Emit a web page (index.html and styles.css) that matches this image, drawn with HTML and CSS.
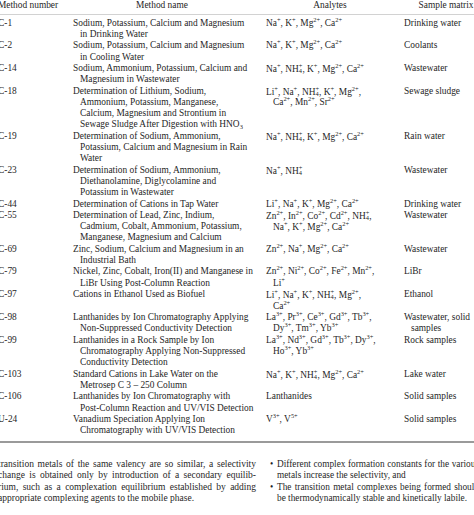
FILE: index.html
```html
<!DOCTYPE html>
<html>
<head>
<meta charset="utf-8">
<link rel="stylesheet" href="styles.css">
</head>
<body>
<div class="page">
  <table class="methods">
    <colgroup>
      <col class="c-num"><col class="c-name"><col class="c-an"><col class="c-mat">
    </colgroup>
    <thead>
      <tr>
        <th class="h-num">Method number</th>
        <th class="h-name">Method name</th>
        <th class="h-an">Analytes</th>
        <th class="h-mat">Sample matrix</th>
      </tr>
    </thead>
    <tbody>
      <tr class="first">
        <td class="num">C-1</td>
        <td class="name">Sodium, Potassium, Calcium and Magnesium<br>in Drinking Water</td>
        <td class="an">Na<sup>+</sup>, K<sup>+</sup>, Mg<sup>2+</sup>, Ca<sup>2+</sup></td>
        <td class="mat">Drinking water</td>
      </tr>
      <tr>
        <td class="num">C-2</td>
        <td class="name">Sodium, Potassium, Calcium and Magnesium<br>in Cooling Water</td>
        <td class="an">Na<sup>+</sup>, K<sup>+</sup>, Mg<sup>2+</sup>, Ca<sup>2+</sup></td>
        <td class="mat">Coolants</td>
      </tr>
      <tr>
        <td class="num">C-14</td>
        <td class="name">Sodium, Ammonium, Potassium, Calcium and<br>Magnesium in Wastewater</td>
        <td class="an">Na<sup>+</sup>, NH<span class="ss"><span class="sp">+</span><span class="sb">4</span></span>, K<sup>+</sup>, Mg<sup>2+</sup>, Ca<sup>2+</sup></td>
        <td class="mat">Wastewater</td>
      </tr>
      <tr>
        <td class="num">C-18</td>
        <td class="name">Determination of Lithium, Sodium,<br>Ammonium, Potassium, Manganese,<br>Calcium, Magnesium and Strontium in<br>Sewage Sludge After Digestion with HNO<sub>3</sub></td>
        <td class="an">Li<sup>+</sup>, Na<sup>+</sup>, NH<span class="ss"><span class="sp">+</span><span class="sb">4</span></span>, K<sup>+</sup>, Mg<sup>2+</sup>,<br>Ca<sup>2+</sup>, Mn<sup>2+</sup>, Sr<sup>2+</sup></td>
        <td class="mat">Sewage sludge</td>
      </tr>
      <tr>
        <td class="num">C-19</td>
        <td class="name">Determination of Sodium, Ammonium,<br>Potassium, Calcium and Magnesium in Rain<br>Water</td>
        <td class="an">Na<sup>+</sup>, NH<span class="ss"><span class="sp">+</span><span class="sb">4</span></span>, K<sup>+</sup>, Mg<sup>2+</sup>, Ca<sup>2+</sup></td>
        <td class="mat">Rain water</td>
      </tr>
      <tr>
        <td class="num">C-23</td>
        <td class="name">Determination of Sodium, Ammonium,<br>Diethanolamine, Diglycolamine and<br>Potassium in Wastewater</td>
        <td class="an">Na<sup>+</sup>, NH<span class="ss"><span class="sp">+</span><span class="sb">4</span></span></td>
        <td class="mat">Wastewater</td>
      </tr>
      <tr>
        <td class="num">C-44</td>
        <td class="name">Determination of Cations in Tap Water</td>
        <td class="an">Li<sup>+</sup>, Na<sup>+</sup>, K<sup>+</sup>, Mg<sup>2+</sup>, Ca<sup>2+</sup></td>
        <td class="mat">Drinking water</td>
      </tr>
      <tr>
        <td class="num">C-55</td>
        <td class="name">Determination of Lead, Zinc, Indium,<br>Cadmium, Cobalt, Ammonium, Potassium,<br>Manganese, Magnesium and Calcium</td>
        <td class="an">Zn<sup>2+</sup>, In<sup>2+</sup>, Co<sup>2+</sup>, Cd<sup>2+</sup>, NH<span class="ss"><span class="sp">+</span><span class="sb">4</span></span>,<br>Na<sup>+</sup>, K<sup>+</sup>, Mg<sup>2+</sup>, Ca<sup>2+</sup></td>
        <td class="mat">Wastewater</td>
      </tr>
      <tr>
        <td class="num">C-69</td>
        <td class="name">Zinc, Sodium, Calcium and Magnesium in an<br>Industrial Bath</td>
        <td class="an">Zn<sup>2+</sup>, Na<sup>+</sup>, Mg<sup>2+</sup>, Ca<sup>2+</sup></td>
        <td class="mat">Wastewater</td>
      </tr>
      <tr>
        <td class="num">C-79</td>
        <td class="name">Nickel, Zinc, Cobalt, Iron(II) and Manganese in<br>LiBr Using Post-Column Reaction</td>
        <td class="an">Zn<sup>2+</sup>, Ni<sup>2+</sup>, Co<sup>2+</sup>, Fe<sup>2+</sup>, Mn<sup>2+</sup>,<br>Li<sup>+</sup></td>
        <td class="mat">LiBr</td>
      </tr>
      <tr>
        <td class="num">C-97</td>
        <td class="name">Cations in Ethanol Used as Biofuel</td>
        <td class="an">Li<sup>+</sup>, Na<sup>+</sup>, K<sup>+</sup>, NH<span class="ss"><span class="sp">+</span><span class="sb">4</span></span>, Mg<sup>2+</sup>,<br>Ca<sup>2+</sup></td>
        <td class="mat">Ethanol</td>
      </tr>
      <tr>
        <td class="num">C-98</td>
        <td class="name">Lanthanides by Ion Chromatography Applying<br>Non-Suppressed Conductivity Detection</td>
        <td class="an">La<sup>3+</sup>, Pr<sup>3+</sup>, Ce<sup>3+</sup>, Gd<sup>3+</sup>, Tb<sup>3+</sup>,<br>Dy<sup>3+</sup>, Tm<sup>3+</sup>, Yb<sup>3+</sup></td>
        <td class="mat">Wastewater, solid<br>samples</td>
      </tr>
      <tr>
        <td class="num">C-99</td>
        <td class="name">Lanthanides in a Rock Sample by Ion<br>Chromatography Applying Non-Suppressed<br>Conductivity Detection</td>
        <td class="an">La<sup>3+</sup>, Nd<sup>3+</sup>, Gd<sup>3+</sup>, Tb<sup>3+</sup>, Dy<sup>3+</sup>,<br>Ho<sup>3+</sup>, Yb<sup>3+</sup></td>
        <td class="mat">Rock samples</td>
      </tr>
      <tr>
        <td class="num">C-103</td>
        <td class="name">Standard Cations in Lake Water on the<br>Metrosep C 3 – 250 Column</td>
        <td class="an">Na<sup>+</sup>, K<sup>+</sup>, NH<span class="ss"><span class="sp">+</span><span class="sb">4</span></span>, Mg<sup>2+</sup>, Ca<sup>2+</sup></td>
        <td class="mat">Lake water</td>
      </tr>
      <tr>
        <td class="num">C-106</td>
        <td class="name">Lanthanides by Ion Chromatography with<br>Post-Column Reaction and UV/VIS Detection</td>
        <td class="an">Lanthanides</td>
        <td class="mat">Solid samples</td>
      </tr>
      <tr class="last">
        <td class="num">U-24</td>
        <td class="name">Vanadium Speciation Applying Ion<br>Chromatography with UV/VIS Detection</td>
        <td class="an">V<sup>3+</sup>, V<sup>5+</sup></td>
        <td class="mat">Solid samples</td>
      </tr>
    </tbody>
  </table>

  <div class="text">
    <p class="col-left">
      <span class="ln j">transition metals of the same valency are so similar, a selectivity</span>
      <span class="ln j">change is obtained only by introduction of a secondary equilib-</span>
      <span class="ln j">rium, such as a complexation equilibrium established by adding</span>
      <span class="ln">appropriate complexing agents to the mobile phase.</span>
    </p>
    <ul class="col-right">
      <li><span class="bullet">•</span><span class="lines"><span class="ln j">Different complex formation constants for the various</span><span class="ln">metals increase the selectivity, and</span></span></li>
      <li><span class="bullet">•</span><span class="lines"><span class="ln j">The transition metal complexes being formed should</span><span class="ln">be thermodynamically stable and kinetically labile.</span></span></li>
    </ul>
  </div>
</div>
</body>
</html>
```

FILE: styles.css
```css
html, body {
  margin: 0;
  padding: 0;
  background: #ffffff;
  overflow: hidden;
}

body {
  width: 474px;
  height: 515px;
}

.page {
  margin-left: -2px;
  width: 500px;
  color: #1f1f1f;
  font-family: "Liberation Serif", "Times New Roman", serif;
  font-size: 9.4px;
  line-height: 11.3px;
}

.methods {
  border-collapse: collapse;
  table-layout: fixed;
  width: 496px;
}

.c-num { width: 75px; }
.c-name { width: 193px; }
.c-an { width: 138px; }
.c-mat { width: 90px; }

.methods th {
  font-weight: normal;
  padding: 0 0 3px 0;
  border-bottom: 1px solid #d2d2d2;
  white-space: nowrap;
  vertical-align: top;
}

.h-num { text-align: left; }
.methods .h-name { text-align: center; padding-right: 15px; }
.methods .h-an { text-align: center; padding-right: 10px; }
.methods .h-mat { text-align: center; padding-right: 6px; }

.methods td {
  padding: 0;
  vertical-align: top;
  white-space: nowrap;
}

.methods .name,
.methods .an,
.methods .mat {
  padding-left: 7px;
  text-indent: -7px;
}

.methods tr.first td {
  padding-top: 2.5px;
}

.methods tr.last td {
  padding-bottom: 5px;
  border-bottom: 2px solid #9a9a9a;
}

sup {
  font-size: 6.4px;
  line-height: 0;
  vertical-align: 3.6px;
}

sub {
  font-size: 6.4px;
  line-height: 0;
  vertical-align: -1.8px;
}

.ss {
  display: inline-block;
  font-size: 6.4px;
  line-height: 5.4px;
  vertical-align: -1.8px;
  text-indent: 0;
}

.ss .sp,
.ss .sb {
  display: block;
}

.text {
  display: flex;
  gap: 14px;
  margin-top: 16px;
  font-size: 9.5px;
  line-height: 11.1px;
}

.col-left {
  margin: 0;
  width: 258px;
  flex: none;
}

.ln {
  display: block;
  white-space: nowrap;
}

.ln.j {
  text-align: justify;
  text-align-last: justify;
}

.col-right {
  margin: 0;
  padding: 0;
  list-style: none;
  width: 209px;
  flex: none;
  font-size: 9.3px;
}

.col-right li {
  display: flex;
}

.bullet {
  width: 7px;
  flex: none;
}

.lines {
  flex: 1;
  min-width: 0;
}
```
